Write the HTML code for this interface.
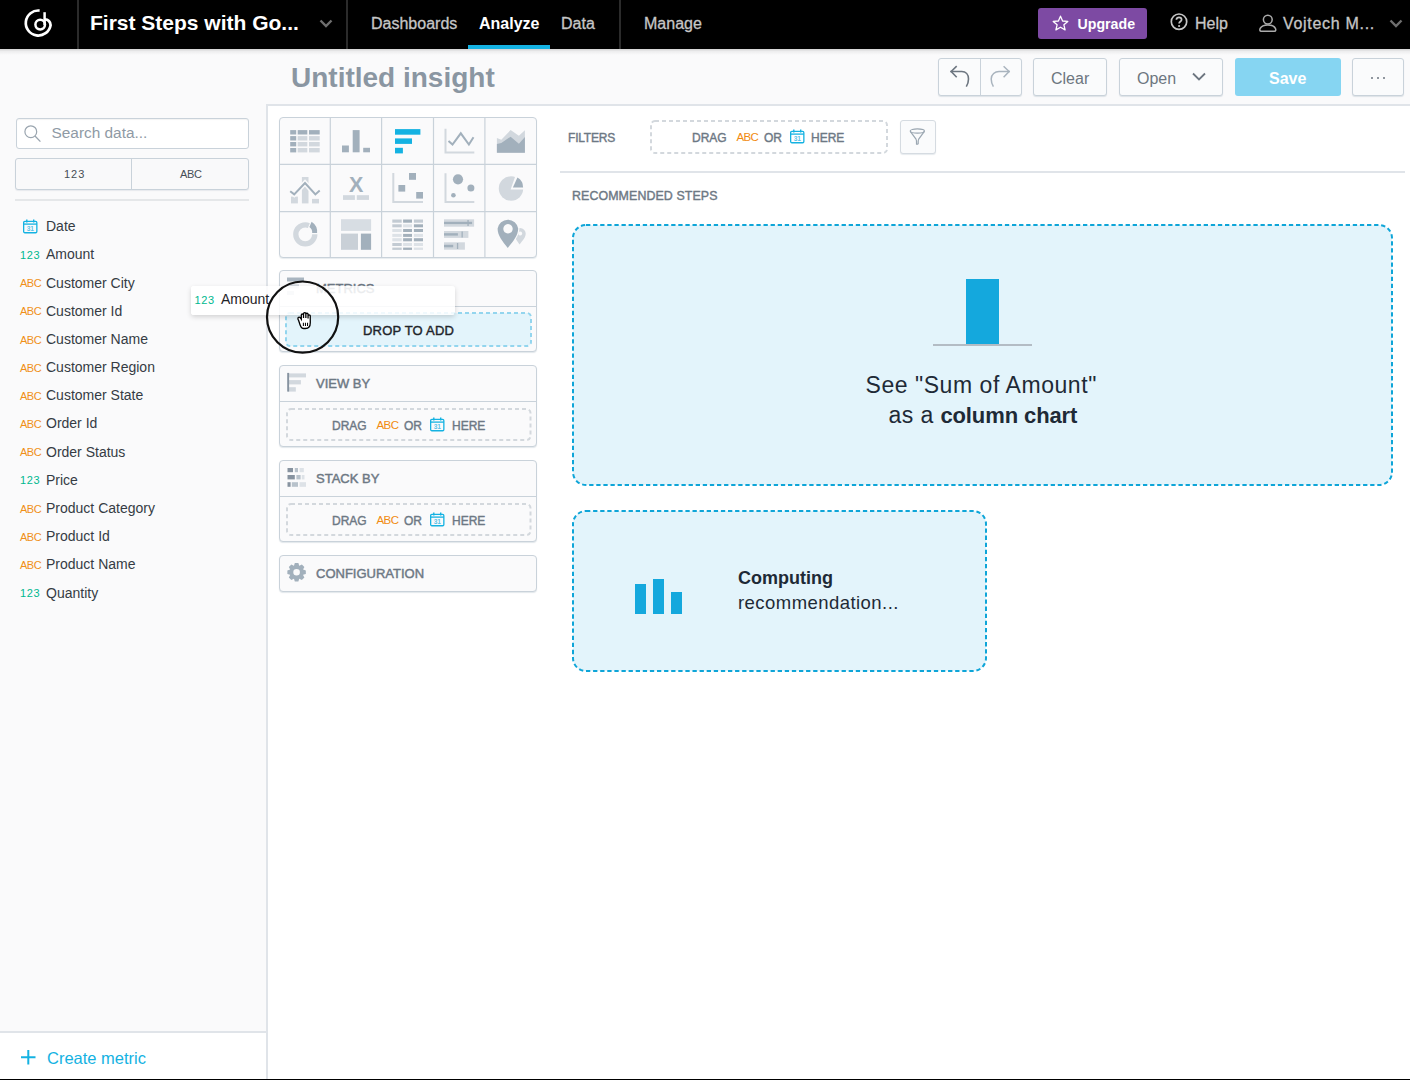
<!DOCTYPE html>
<html><head><meta charset="utf-8">
<style>
*{box-sizing:border-box;margin:0;padding:0}
html,body{width:1410px;height:1080px;overflow:hidden;background:#fff;font-family:"Liberation Sans",sans-serif;position:relative}
.a{position:absolute}
.t{position:absolute;white-space:nowrap;line-height:1}
svg{position:absolute;overflow:visible}
</style></head><body>

<!-- TOP BAR -->
<div class="a" style="left:0;top:0;width:1410px;height:49px;background:#000"></div>

<svg style="left:0;top:0" width="80" height="48">
  <path d="M39.6 10.6 A12.5 12.5 0 1 0 50.6 25.2 C50.4 22.2 48.3 19.6 44.6 19.4" fill="none" stroke="#fff" stroke-width="2.7" stroke-linecap="butt"/>
  <path d="M44.6 12.2 V25" fill="none" stroke="#fff" stroke-width="2.5"/>
  <circle cx="40.2" cy="24.6" r="4.8" fill="none" stroke="#fff" stroke-width="2.5"/>
</svg>
<div class="a" style="left:77px;top:0;width:2px;height:49px;background:#2b2b2b"></div>
<div class="t" style="left:90px;top:12.3px;font-size:21px;font-weight:700;color:#fff">First Steps with Go...</div>
<svg style="left:318px;top:17px" width="16" height="12"><path d="M2.5 3.5 L8 9 L13.5 3.5" fill="none" stroke="#6f6f6f" stroke-width="2.4"/></svg>
<div class="a" style="left:346px;top:0;width:2px;height:49px;background:#2b2b2b"></div>
<div class="t" style="left:371px;top:15.5px;font-size:16px;color:#c6c6c6;-webkit-text-stroke:0.3px #c6c6c6">Dashboards</div>
<div class="t" style="left:479px;top:15.5px;font-size:16px;font-weight:700;color:#fff">Analyze</div>
<div class="t" style="left:561px;top:15.5px;font-size:16px;color:#c6c6c6;-webkit-text-stroke:0.3px #c6c6c6">Data</div>
<div class="a" style="left:468px;top:45px;width:82px;height:4px;background:#14b2e2"></div>
<div class="a" style="left:619px;top:0;width:2px;height:49px;background:#2b2b2b"></div>
<div class="t" style="left:644px;top:15.5px;font-size:16px;color:#c6c6c6;-webkit-text-stroke:0.3px #c6c6c6">Manage</div>

<div class="a" style="left:1038px;top:8px;width:109px;height:31px;background:#7d4aa3;border-radius:3px"></div>
<svg style="left:1052px;top:15px" width="17" height="17"><path d="M8.5 1.2 L10.6 6 L15.8 6.4 L11.9 9.8 L13.1 14.9 L8.5 12.2 L3.9 14.9 L5.1 9.8 L1.2 6.4 L6.4 6 Z" fill="none" stroke="#fff" stroke-width="1.3" stroke-linejoin="round"/></svg>
<div class="t" style="left:1077.5px;top:16.6px;font-size:14.2px;font-weight:700;color:#fff">Upgrade</div>
<svg style="left:1170px;top:13px" width="18" height="18"><circle cx="9" cy="8.7" r="7.7" fill="none" stroke="#c6c6c6" stroke-width="1.7"/><path d="M6.4 6.8 C6.4 5.2 7.6 4.3 9 4.3 C10.5 4.3 11.6 5.3 11.6 6.7 C11.6 8.4 9.1 8.6 9.1 10.5" fill="none" stroke="#c6c6c6" stroke-width="1.7"/><circle cx="9.1" cy="13" r="1.1" fill="#c6c6c6"/></svg>
<div class="t" style="left:1195px;top:15.5px;font-size:16px;color:#c6c6c6;-webkit-text-stroke:0.3px #c6c6c6">Help</div>
<svg style="left:1258px;top:13px" width="20" height="20"><circle cx="9.8" cy="6.6" r="4.4" fill="none" stroke="#ababab" stroke-width="1.5"/><path d="M3.2 18.2 C1.6 18.2 1.6 16.6 2.2 15.4 C3.3 13.2 6 11.9 9.8 11.9 C13.6 11.9 16.3 13.2 17.4 15.4 C18 16.6 18 18.2 16.4 18.2 Z" fill="none" stroke="#ababab" stroke-width="1.5" stroke-linejoin="round"/></svg>
<div class="t" style="left:1283px;top:15.5px;font-size:16px;color:#c6c6c6;letter-spacing:0.7px;-webkit-text-stroke:0.3px #c6c6c6">Vojtech M...</div>
<svg style="left:1388px;top:17px" width="16" height="12"><path d="M2.5 3.5 L8 9 L13.5 3.5" fill="none" stroke="#6f6f6f" stroke-width="2.4"/></svg>

<!-- HEADER ROW -->
<div class="a" style="left:0;top:49px;width:1410px;height:55px;background:#fafafb"></div>
<div class="a" style="left:0;top:49px;width:1410px;height:6px;background:linear-gradient(rgba(0,0,0,.16),rgba(0,0,0,.05) 40%,rgba(0,0,0,0))"></div>
<div class="a" style="left:266px;top:104px;width:1144px;height:2px;background:#e0e4e9"></div>
<div class="t" style="left:291px;top:63.7px;font-size:28px;font-weight:700;color:#8a96a2">Untitled insight</div>


<!-- toolbar buttons -->
<div class="a" style="left:938px;top:58px;width:84px;height:38px;border:1px solid #c9d2da;border-radius:3px;background:#fafbfc;box-shadow:0 1px 1px rgba(20,56,93,.12)"></div>
<div class="a" style="left:980px;top:59px;width:1px;height:36px;background:#c9d2da"></div>
<svg style="left:946px;top:63px" width="28" height="28"><path d="M4.3 8.5 H15.8 C19.8 8.5 22.5 11.5 22.5 16 C22.5 19 21.6 21.5 20.3 23.6" fill="none" stroke="#6d7680" stroke-width="1.6"/><path d="M10.7 3.2 L5.2 8.5 L10.7 14.3" fill="none" stroke="#6d7680" stroke-width="1.6"/></svg>
<svg style="left:987px;top:63px" width="28" height="28"><path d="M23 8.5 H12 C8 8.5 4.2 11.5 4.2 16 C4.2 19 5.1 21.5 6.4 23.6" fill="none" stroke="#a9b4be" stroke-width="1.5"/><path d="M16.6 3.2 L22.1 8.5 L16.6 14.3" fill="none" stroke="#a9b4be" stroke-width="1.5"/></svg>
<div class="a" style="left:1033px;top:58px;width:74px;height:38px;border:1px solid #c9d2da;border-radius:3px;background:#fafbfc;box-shadow:0 1px 1px rgba(20,56,93,.12)"></div>
<div class="t" style="left:1051px;top:71px;font-size:16px;color:#6d7680">Clear</div>
<div class="a" style="left:1119px;top:58px;width:104px;height:38px;border:1px solid #c9d2da;border-radius:3px;background:#fafbfc;box-shadow:0 1px 1px rgba(20,56,93,.12)"></div>
<div class="t" style="left:1137px;top:71px;font-size:16px;color:#6d7680">Open</div>
<svg style="left:1191px;top:71px" width="16" height="12"><path d="M2 2.5 L8 8.5 L14 2.5" fill="none" stroke="#6d7680" stroke-width="1.8"/></svg>
<div class="a" style="left:1235px;top:58px;width:106px;height:38px;border-radius:3px;background:#86d5f2"></div>
<div class="t" style="left:1269px;top:71px;font-size:16px;font-weight:700;color:#fff">Save</div>
<div class="a" style="left:1352px;top:58px;width:52px;height:38px;border:1px solid #c9d2da;border-radius:3px;background:#fafbfc;box-shadow:0 1px 1px rgba(20,56,93,.12)"></div>
<div class="a" style="left:1371px;top:77px;width:2px;height:2px;background:#6d7680;border-radius:1px"></div>
<div class="a" style="left:1377px;top:77px;width:2px;height:2px;background:#6d7680;border-radius:1px"></div>
<div class="a" style="left:1383px;top:77px;width:2px;height:2px;background:#6d7680;border-radius:1px"></div>

<!-- LEFT PANEL -->
<div class="a" style="left:0;top:104px;width:266px;height:927px;background:#fafafb"></div>
<div class="a" style="left:266px;top:104px;width:2px;height:975px;background:#e0e4e9"></div>
<div class="a" style="left:0;top:1031px;width:266px;height:2px;background:#e0e4e9"></div>
<div class="a" style="left:15.5px;top:117.5px;width:233px;height:31.5px;border:1px solid #c9d2da;border-radius:3px;background:#fff;box-shadow:inset 0 1px 1px rgba(0,0,0,.05)"></div>
<svg style="left:22px;top:123px" width="22" height="22"><circle cx="8.8" cy="8.7" r="5.9" fill="none" stroke="#9aa5af" stroke-width="1.2"/><path d="M13 13 L18.4 18.6" stroke="#9aa5af" stroke-width="1.3"/></svg>
<div class="t" style="left:51.5px;top:124.6px;font-size:15.4px;color:#8f9aa5">Search data...</div>
<div class="a" style="left:15px;top:158px;width:234px;height:32px;border:1px solid #c9d2da;border-radius:3px;background:#f9f9fa;box-shadow:0 1px 1px rgba(20,56,93,.08)"></div>
<div class="a" style="left:131px;top:159px;width:1px;height:30px;background:#c9d2da"></div>
<div class="t" style="left:64px;top:169px;font-size:11px;color:#464e56;letter-spacing:1px">123</div>
<div class="t" style="left:180px;top:169px;font-size:11px;color:#464e56;letter-spacing:-0.3px">ABC</div>
<div class="a" style="left:15px;top:199px;width:234px;height:2px;background:#e5e7e9"></div>

<div class="t" style="left:46px;top:219.2px;font-size:14px;color:#353c44">Date</div>
<svg style="left:23.0px;top:218.8px" width="15" height="15"><rect x="0.65" y="2.45" width="13.2" height="11.3" rx="1.2" fill="none" stroke="#14b2e2" stroke-width="1.3"/><path d="M0.65 5.1 H13.85" stroke="#14b2e2" stroke-width="1.3"/><path d="M3.8 0.6 V3.6 M10.7 0.6 V3.6" stroke="#14b2e2" stroke-width="1.4"/><text x="7.3" y="12.1" font-size="6.6" text-anchor="middle" fill="#5cc2e8" font-family="Liberation Sans" font-weight="700">31</text></svg>
<div class="t" style="left:46px;top:247.4px;font-size:14px;color:#353c44">Amount</div>
<div class="t" style="left:20px;top:250.0px;font-size:11px;color:#00b88f;letter-spacing:0.6px">123</div>
<div class="t" style="left:46px;top:275.6px;font-size:14px;color:#353c44">Customer City</div>
<div class="t" style="left:20px;top:278.1px;font-size:11px;color:#f09018;letter-spacing:-0.5px">ABC</div>
<div class="t" style="left:46px;top:303.8px;font-size:14px;color:#353c44">Customer Id</div>
<div class="t" style="left:20px;top:306.3px;font-size:11px;color:#f09018;letter-spacing:-0.5px">ABC</div>
<div class="t" style="left:46px;top:331.9px;font-size:14px;color:#353c44">Customer Name</div>
<div class="t" style="left:20px;top:334.5px;font-size:11px;color:#f09018;letter-spacing:-0.5px">ABC</div>
<div class="t" style="left:46px;top:360.1px;font-size:14px;color:#353c44">Customer Region</div>
<div class="t" style="left:20px;top:362.7px;font-size:11px;color:#f09018;letter-spacing:-0.5px">ABC</div>
<div class="t" style="left:46px;top:388.3px;font-size:14px;color:#353c44">Customer State</div>
<div class="t" style="left:20px;top:390.8px;font-size:11px;color:#f09018;letter-spacing:-0.5px">ABC</div>
<div class="t" style="left:46px;top:416.4px;font-size:14px;color:#353c44">Order Id</div>
<div class="t" style="left:20px;top:419.0px;font-size:11px;color:#f09018;letter-spacing:-0.5px">ABC</div>
<div class="t" style="left:46px;top:444.6px;font-size:14px;color:#353c44">Order Status</div>
<div class="t" style="left:20px;top:447.2px;font-size:11px;color:#f09018;letter-spacing:-0.5px">ABC</div>
<div class="t" style="left:46px;top:472.8px;font-size:14px;color:#353c44">Price</div>
<div class="t" style="left:20px;top:475.3px;font-size:11px;color:#00b88f;letter-spacing:0.6px">123</div>
<div class="t" style="left:46px;top:501.0px;font-size:14px;color:#353c44">Product Category</div>
<div class="t" style="left:20px;top:503.5px;font-size:11px;color:#f09018;letter-spacing:-0.5px">ABC</div>
<div class="t" style="left:46px;top:529.1px;font-size:14px;color:#353c44">Product Id</div>
<div class="t" style="left:20px;top:531.7px;font-size:11px;color:#f09018;letter-spacing:-0.5px">ABC</div>
<div class="t" style="left:46px;top:557.3px;font-size:14px;color:#353c44">Product Name</div>
<div class="t" style="left:20px;top:559.8px;font-size:11px;color:#f09018;letter-spacing:-0.5px">ABC</div>
<div class="t" style="left:46px;top:585.5px;font-size:14px;color:#353c44">Quantity</div>
<div class="t" style="left:20px;top:588.0px;font-size:11px;color:#00b88f;letter-spacing:0.6px">123</div>
<div class="a" style="left:0;top:1033px;width:266px;height:46px;background:#fff"></div>
<svg style="left:20px;top:1049px" width="17" height="17"><path d="M8.3 1 V15.5 M1 8.3 H15.5" stroke="#14b2e2" stroke-width="2"/></svg>
<div class="t" style="left:47px;top:1049.5px;font-size:16.5px;color:#14b2e2">Create metric</div>
<div class="a" style="left:0;top:1079px;width:1410px;height:1px;background:#000"></div>


<!-- CHART TYPE GRID -->
<div class="a" style="left:279px;top:117px;width:258px;height:141px;border:1px solid #c9d2da;border-radius:4px;background:#fafafb;box-shadow:0 1px 1px rgba(20,56,93,.10)"></div>
<svg style="left:0;top:0" width="1410" height="300">
  <g stroke="#c9d2da" stroke-width="1.2">
    <path d="M330.3 118 V257.5 M381.6 118 V257.5 M433.5 118 V257.5 M484.9 118 V257.5"/>
    <path d="M280 164.4 H536.5 M280 211.6 H536.5"/>
  </g>
  <!-- table -->
  <g fill="#a2b0bc">
    <rect x="290.2" y="130.1" width="6" height="4.4"/><rect x="297.7" y="130.1" width="9.6" height="4.4"/><rect x="309" y="130.1" width="10.7" height="4.4"/>
    <rect x="290.2" y="136.1" width="6" height="4.4"/><rect x="290.2" y="142" width="6" height="4.4"/><rect x="290.2" y="148" width="6" height="4.4"/>
  </g>
  <g fill="#d2d8de">
    <rect x="297.7" y="136.1" width="9.6" height="4.4"/><rect x="309" y="136.1" width="10.7" height="4.4"/>
    <rect x="297.7" y="142" width="9.6" height="4.4"/><rect x="309" y="142" width="10.7" height="4.4"/>
    <rect x="297.7" y="148" width="9.6" height="4.4"/><rect x="309" y="148" width="10.7" height="4.4"/>
  </g>
  <!-- column -->
  <g fill="#a2b0bc"><rect x="342" y="145.5" width="6.9" height="6.8"/><rect x="352.7" y="130.1" width="6.9" height="22.2"/><rect x="363.2" y="147.8" width="6.8" height="4.5"/></g>
  <!-- bar active -->
  <g fill="#14b2e2"><rect x="395" y="129.1" width="25.4" height="5.6"/><rect x="395" y="138.4" width="17" height="5.5"/><rect x="395" y="147.8" width="7.9" height="5.6"/></g>
  <!-- line -->
  <path d="M445.5 128.8 V152.4 H474.3" fill="none" stroke="#d2d8de" stroke-width="2"/>
  <path d="M448.5 140.9 L452.5 144.5 L460.8 133.3 L468.9 144.5 L473.5 137.3" fill="none" stroke="#a2b0bc" stroke-width="2"/>
  <!-- area -->
  <path d="M496.9 152.7 V137.9 L501.3 139.7 L510.6 130 L518.9 135.8 L524.9 130.2 V152.7 Z" fill="#d2d8de"/>
  <path d="M496.9 152.7 V144.1 L501.3 142.9 L510.6 136.7 L518.9 143.8 L524.9 137.1 V152.7 Z" fill="#a2b0bc"/>
  <!-- combo -->
  <g fill="#d2d8de"><rect x="291" y="196.6" width="6.9" height="6.8"/><rect x="301.9" y="177" width="6.6" height="26.4"/><rect x="312" y="198.9" width="7" height="4.5"/></g>
  <path d="M290.2 191.2 L294.2 194.4 L305 183 L315.4 194.4 L319.7 190.6" fill="none" stroke="#fafafb" stroke-width="5" stroke-linejoin="miter"/>
  <path d="M290.2 191.2 L294.2 194.4 L305 183 L315.4 194.4 L319.7 190.6" fill="none" stroke="#a2b0bc" stroke-width="2"/>
  <!-- headline X -->
  <text x="356.2" y="192" font-family="Liberation Sans" font-weight="700" font-size="21.5" text-anchor="middle" fill="#a2b0bc">X</text>
  <g fill="#d2d8de"><rect x="343" y="195.2" width="11.9" height="4.7"/><rect x="356.8" y="195.2" width="12.2" height="4.7"/></g>
  <!-- scatter -->
  <path d="M393.3 173 V202 H423" fill="none" stroke="#d2d8de" stroke-width="2"/>
  <g fill="#a2b0bc"><rect x="409" y="173" width="7" height="6.8"/><rect x="398.4" y="185" width="6.8" height="6.6"/><rect x="416.2" y="192" width="6.8" height="6.6"/></g>
  <!-- bubble -->
  <path d="M445.5 173.3 V201.9 H474.3" fill="none" stroke="#d2d8de" stroke-width="2"/>
  <g fill="#a2b0bc"><circle cx="458" cy="179.3" r="5.1"/><circle cx="470.9" cy="188.1" r="3.5"/><circle cx="453.4" cy="195.2" r="2.3"/></g>
  <!-- pie -->
  <circle cx="511" cy="188.5" r="12.2" fill="#d2d8de"/>
  <path d="M510.6 189.6 L515.9 174.6 A14.5 14.5 0 0 1 526 189.6 Z" fill="#fafafb"/>
  <path d="M512.9 187.4 L517.4 177.4 A11.4 11.4 0 0 1 523.1 187.4 Z" fill="#a2b0bc"/>
  <!-- donut -->
  <circle cx="305.3" cy="234.3" r="9.5" fill="none" stroke="#d2d8de" stroke-width="5.3"/>
  <path d="M305.3 234.3 L311.3 219.8 A16 16 0 0 1 321.3 234.3 Z" fill="#fafafb"/>
  <path d="M311.6 221.7 A12.2 12.2 0 0 1 317.1 233.1 L312.2 233.1 A6.9 6.9 0 0 0 309.4 227.1 Z" fill="#a2b0bc"/>
  <!-- treemap -->
  <rect x="341" y="219.2" width="30.1" height="11.7" fill="#d7dde3"/>
  <rect x="341" y="233.6" width="17" height="16.2" fill="#c9d0d7"/>
  <rect x="360.9" y="233.6" width="10.2" height="16.2" fill="#a2b0bc"/>
  <!-- heatmap -->
  <g>
<rect x="392.3" y="219.5" width="9.4" height="3.2" fill="#c3cbd3"/><rect x="403.1" y="219.5" width="8.9" height="3.2" fill="#a3b0bb"/><rect x="413.9" y="219.5" width="9.1" height="3.2" fill="#c3cbd3"/><rect x="392.3" y="224.3" width="9.4" height="3" fill="#c3cbd3"/><rect x="403.1" y="224.3" width="8.9" height="3" fill="#dde2e7"/><rect x="413.9" y="224.3" width="9.1" height="3" fill="#a3b0bb"/><rect x="392.3" y="229" width="9.4" height="3" fill="#dde2e7"/><rect x="403.1" y="229" width="8.9" height="3" fill="#a3b0bb"/><rect x="413.9" y="229" width="9.1" height="3" fill="#a3b0bb"/><rect x="392.3" y="233.9" width="9.4" height="3" fill="#dde2e7"/><rect x="403.1" y="233.9" width="8.9" height="3" fill="#a3b0bb"/><rect x="413.9" y="233.9" width="9.1" height="3" fill="#dde2e7"/><rect x="392.3" y="238.2" width="9.4" height="3.1" fill="#dde2e7"/><rect x="403.1" y="238.2" width="8.9" height="3.1" fill="#a3b0bb"/><rect x="413.9" y="238.2" width="9.1" height="3.1" fill="#a3b0bb"/><rect x="392.3" y="243" width="9.4" height="3" fill="#c3cbd3"/><rect x="403.1" y="243" width="8.9" height="3" fill="#dde2e7"/><rect x="413.9" y="243" width="9.1" height="3" fill="#dde2e7"/><rect x="392.3" y="247.6" width="9.4" height="2.3" fill="#c3cbd3"/><rect x="403.1" y="247.6" width="8.9" height="2.3" fill="#a3b0bb"/><rect x="413.9" y="247.6" width="9.1" height="2.3" fill="#dde2e7"/>
  </g>
  <!-- bullet -->
  <g fill="#d2d8de"><rect x="444" y="219.3" width="30.1" height="7.4"/><rect x="444" y="231" width="24.4" height="6.9"/><rect x="444" y="242.3" width="20.9" height="7.4"/></g>
  <g fill="#a2b0bc"><rect x="444" y="221.8" width="28.1" height="2.3"/><rect x="467.4" y="220" width="1.3" height="6"/>
  <rect x="444" y="233.2" width="13.9" height="2.4"/><rect x="461.5" y="231.5" width="1.3" height="6"/>
  <rect x="444" y="244.8" width="9.2" height="2.5"/><rect x="456.9" y="243" width="1.3" height="6"/></g>
  <!-- geo pins -->
  <path d="M519.6 244.6 C516.5 240.5 514.5 237.6 514.5 233.6 A5.6 5.6 0 0 1 525.7 233.6 C525.7 237.6 522.7 240.5 519.6 244.6 Z M520.2 231.6 A2 2 0 1 0 520.21 231.6 Z" fill="#d2d8de" fill-rule="evenodd"/>
  <path d="M507.8 249.6 C502 242.5 496.2 236 496.2 228.6 A11.6 11.6 0 0 1 519.4 228.6 C519.4 236 513.6 242.5 507.8 249.6 Z" fill="#fafafb"/>
  <path d="M507.8 248 C502.6 241.5 497.6 235.8 497.6 228.6 A10.4 10.4 0 0 1 518.2 228.6 C518.2 235.8 513 241.5 507.8 248 Z M508 224.1 A4.7 4.7 0 1 0 508.01 224.1 Z" fill="#a2b0bc" fill-rule="evenodd"/>
</svg>


<!-- BUCKETS -->
<div class="a" style="left:279px;top:270px;width:258px;height:82px;border:1px solid #c9d2da;border-radius:4px;background:#fafafb;box-shadow:0 1px 1px rgba(20,56,93,.12)"></div><div class="a" style="left:280px;top:306px;width:256px;height:1px;background:#c9d2da"></div><div class="a" style="left:279px;top:365px;width:258px;height:82px;border:1px solid #c9d2da;border-radius:4px;background:#fafafb;box-shadow:0 1px 1px rgba(20,56,93,.12)"></div><div class="a" style="left:280px;top:401px;width:256px;height:1px;background:#c9d2da"></div><div class="a" style="left:279px;top:460px;width:258px;height:82px;border:1px solid #c9d2da;border-radius:4px;background:#fafafb;box-shadow:0 1px 1px rgba(20,56,93,.12)"></div><div class="a" style="left:280px;top:496px;width:256px;height:1px;background:#c9d2da"></div><div class="a" style="left:279px;top:555px;width:258px;height:37px;border:1px solid #c9d2da;border-radius:4px;background:#fafafb;box-shadow:0 1px 1px rgba(20,56,93,.12)"></div><svg style="left:287px;top:277px" width="20" height="20"><rect x="0" y="0.5" width="17" height="4" fill="#a9b5c0"/><rect x="0" y="7.3" width="12" height="4" fill="#d2d8de"/><rect x="0" y="14" width="7" height="4" fill="#d2d8de"/></svg><div class="t" style="left:316px;top:282.2px;font-size:13px;font-weight:400;color:#6d7884;-webkit-text-stroke:0.45px #6d7884">METRICS</div><svg style="left:285px;top:312px" width="247" height="35"><rect x="1" y="1" width="245" height="33" rx="4" fill="#e3f4fb" stroke="#93d5ee" stroke-width="2" stroke-dasharray="4 3"/></svg><div class="t" style="left:363px;top:324.3px;font-size:13px;font-weight:400;color:#1f242a;letter-spacing:0.2px;-webkit-text-stroke:0.4px #1f242a">DROP TO ADD</div><svg style="left:287px;top:372px" width="20" height="20"><rect x="1.2" y="1.4" width="17.8" height="4" fill="#d2d8de"/><rect x="1.2" y="8.1" width="12.7" height="4.3" fill="#d2d8de"/><rect x="1.2" y="15.2" width="7.6" height="4.4" fill="#d2d8de"/><rect x="0.2" y="0.9" width="1.9" height="18.7" fill="#8793a0"/></svg><div class="t" style="left:316px;top:376.5px;font-size:13px;font-weight:400;color:#6d7884;-webkit-text-stroke:0.45px #6d7884">VIEW BY</div><svg style="left:285.5px;top:408px" width="245.5" height="33"><rect x="1" y="1" width="243.5" height="31" rx="4" fill="none" stroke="#d3d8dd" stroke-width="2" stroke-dasharray="4 3"/></svg><div class="t" style="left:332px;top:419.5px;font-size:12px;font-weight:400;color:#6d7884;-webkit-text-stroke:0.4px #6d7884">DRAG</div><div class="t" style="left:376.5px;top:419.7px;font-size:11.5px;color:#f18a10;letter-spacing:-0.6px">ABC</div><div class="t" style="left:404px;top:419.5px;font-size:12px;font-weight:400;color:#6d7884;-webkit-text-stroke:0.4px #6d7884">OR</div><svg style="left:429.5px;top:417.2px" width="15" height="15"><rect x="0.65" y="2.45" width="13.2" height="11.3" rx="1.2" fill="none" stroke="#14b2e2" stroke-width="1.3"/><path d="M0.65 5.1 H13.85" stroke="#14b2e2" stroke-width="1.3"/><path d="M3.8 0.6 V3.6 M10.7 0.6 V3.6" stroke="#14b2e2" stroke-width="1.4"/><text x="7.3" y="12.1" font-size="6.6" text-anchor="middle" fill="#5cc2e8" font-family="Liberation Sans" font-weight="700">31</text></svg><div class="t" style="left:452px;top:419.5px;font-size:12px;font-weight:400;color:#6d7884;-webkit-text-stroke:0.4px #6d7884">HERE</div><svg style="left:287px;top:467px" width="22" height="22"><g transform="translate(-287,-467)"><rect x="287.5" y="468" width="5.5" height="4.2" fill="#8793a0"/><rect x="294.8" y="468" width="3.2" height="4.2" fill="#b8c2cb"/><rect x="299.6" y="468" width="4.2" height="4.2" fill="#dde2e7"/><rect x="287.5" y="475" width="7.3" height="4.4" fill="#8793a0"/><rect x="296.4" y="475" width="4.2" height="4.4" fill="#b8c2cb"/><rect x="301.8" y="475" width="2.7" height="4.4" fill="#dde2e7"/><rect x="287.5" y="482.2" width="3.1" height="4.6" fill="#8793a0"/><rect x="291.8" y="482.2" width="6.2" height="4.6" fill="#b8c2cb"/><rect x="299.6" y="482.2" width="6.4" height="4.6" fill="#dde2e7"/></g></svg><div class="t" style="left:316px;top:472.1px;font-size:13px;font-weight:400;color:#6d7884;-webkit-text-stroke:0.45px #6d7884">STACK BY</div><svg style="left:285.5px;top:503px" width="245.5" height="33"><rect x="1" y="1" width="243.5" height="31" rx="4" fill="none" stroke="#d3d8dd" stroke-width="2" stroke-dasharray="4 3"/></svg><div class="t" style="left:332px;top:514.5px;font-size:12px;font-weight:400;color:#6d7884;-webkit-text-stroke:0.4px #6d7884">DRAG</div><div class="t" style="left:376.5px;top:514.7px;font-size:11.5px;color:#f18a10;letter-spacing:-0.6px">ABC</div><div class="t" style="left:404px;top:514.5px;font-size:12px;font-weight:400;color:#6d7884;-webkit-text-stroke:0.4px #6d7884">OR</div><svg style="left:429.5px;top:512.2px" width="15" height="15"><rect x="0.65" y="2.45" width="13.2" height="11.3" rx="1.2" fill="none" stroke="#14b2e2" stroke-width="1.3"/><path d="M0.65 5.1 H13.85" stroke="#14b2e2" stroke-width="1.3"/><path d="M3.8 0.6 V3.6 M10.7 0.6 V3.6" stroke="#14b2e2" stroke-width="1.4"/><text x="7.3" y="12.1" font-size="6.6" text-anchor="middle" fill="#5cc2e8" font-family="Liberation Sans" font-weight="700">31</text></svg><div class="t" style="left:452px;top:514.5px;font-size:12px;font-weight:400;color:#6d7884;-webkit-text-stroke:0.4px #6d7884">HERE</div><svg style="left:0;top:0" width="400" height="600"><path d="M293.98 565.71 L294.81 562.97 L298.39 562.97 L299.22 565.71 L299.34 565.76 L301.86 564.41 L304.39 566.94 L303.04 569.46 L303.09 569.58 L305.83 570.41 L305.83 573.99 L303.09 574.82 L303.04 574.94 L304.39 577.46 L301.86 579.99 L299.34 578.64 L299.22 578.69 L298.39 581.43 L294.81 581.43 L293.98 578.69 L293.86 578.64 L291.34 579.99 L288.81 577.46 L290.16 574.94 L290.11 574.82 L287.37 573.99 L287.37 570.41 L290.11 569.58 L290.16 569.46 L288.81 566.94 L291.34 564.41 L293.86 565.76 Z M299.90 572.20 A3.3 3.3 0 1 0 293.30 572.20 A3.3 3.3 0 1 0 299.90 572.20 Z" fill="#a2b0bc" fill-rule="evenodd"/></svg><div class="t" style="left:316px;top:567.2px;font-size:13px;font-weight:400;color:#6d7884;-webkit-text-stroke:0.45px #6d7884">CONFIGURATION</div>
<!-- FILTERS -->
<div class="t" style="left:568px;top:131.5px;font-size:12px;font-weight:400;color:#6d7884;letter-spacing:-0.2px;-webkit-text-stroke:0.4px #6d7884">FILTERS</div><svg style="left:649.5px;top:119.5px" width="238.0" height="34.0"><rect x="1" y="1" width="236.0" height="32.0" rx="4" fill="none" stroke="#d3d8dd" stroke-width="2" stroke-dasharray="4 3"/></svg><div class="t" style="left:692px;top:131.5px;font-size:12px;font-weight:400;color:#6d7884;-webkit-text-stroke:0.4px #6d7884">DRAG</div><div class="t" style="left:736.4px;top:131.7px;font-size:11.5px;color:#f18a10;letter-spacing:-0.6px">ABC</div><div class="t" style="left:764px;top:131.5px;font-size:12px;font-weight:400;color:#6d7884;-webkit-text-stroke:0.4px #6d7884">OR</div><svg style="left:789.5px;top:129.2px" width="15" height="15"><rect x="0.65" y="2.45" width="13.2" height="11.3" rx="1.2" fill="none" stroke="#14b2e2" stroke-width="1.3"/><path d="M0.65 5.1 H13.85" stroke="#14b2e2" stroke-width="1.3"/><path d="M3.8 0.6 V3.6 M10.7 0.6 V3.6" stroke="#14b2e2" stroke-width="1.4"/><text x="7.3" y="12.1" font-size="6.6" text-anchor="middle" fill="#5cc2e8" font-family="Liberation Sans" font-weight="700">31</text></svg><div class="t" style="left:811px;top:131.5px;font-size:12px;font-weight:400;color:#6d7884;-webkit-text-stroke:0.4px #6d7884">HERE</div><div class="a" style="left:900px;top:120px;width:36px;height:34px;border:1px solid #d5dbe1;border-radius:3px;background:#fafbfc;box-shadow:0 1px 1px rgba(20,56,93,.10)"></div><svg style="left:908px;top:127px" width="20" height="20"><ellipse cx="9.3" cy="4" rx="7.1" ry="2.1" fill="none" stroke="#9aa6b1" stroke-width="1.2"/><path d="M2.3 4.4 L8 12.2 C8.4 12.9 8.5 13.6 8.5 14.4 V17.2 C9.3 17.4 9.8 17.2 10.2 16.6 V14.4 C10.2 13.6 10.3 12.9 10.7 12.2 L16.4 4.4" fill="none" stroke="#9aa6b1" stroke-width="1.2" stroke-linejoin="round"/></svg><div class="a" style="left:560px;top:170.5px;width:845px;height:2px;background:#e0e4e9"></div><div class="t" style="left:572px;top:189.8px;font-size:12.4px;font-weight:400;color:#6d7884;letter-spacing:0.1px;-webkit-text-stroke:0.4px #6d7884">RECOMMENDED STEPS</div><svg style="left:572px;top:224px" width="821" height="262"><rect x="1" y="1" width="819" height="260" rx="13" fill="#e3f4fb" stroke="#0ea5d8" stroke-width="2" stroke-dasharray="4.3 2.8"/></svg><div class="a" style="left:966px;top:278.5px;width:33px;height:65.5px;background:#14a8dd"></div><div class="a" style="left:933px;top:344px;width:99px;height:2px;background:#b3bcc4"></div><div class="t" style="left:865.5px;top:373.6px;font-size:23px;color:#1e2a36;letter-spacing:0.55px">See "Sum of Amount"</div><div class="t" style="left:888.5px;top:404.2px;font-size:23px;color:#1e2a36;letter-spacing:0.4px">as a <b style="font-size:22px;letter-spacing:-0.1px">column chart</b></div><svg style="left:572px;top:510px" width="415" height="162"><rect x="1" y="1" width="413" height="160" rx="13" fill="#e3f4fb" stroke="#0ea5d8" stroke-width="2" stroke-dasharray="4.3 2.8"/></svg><div class="a" style="left:635px;top:584.3px;width:11.3px;height:30px;background:#14a8dd"></div><div class="a" style="left:653px;top:578.6px;width:11.3px;height:35.7px;background:#14a8dd"></div><div class="a" style="left:670.5px;top:591.5px;width:11.5px;height:22.8px;background:#14a8dd"></div><div class="t" style="left:738px;top:569.2px;font-size:18px;font-weight:700;color:#1e2a36">Computing</div><div class="t" style="left:738px;top:593.5px;font-size:18.5px;color:#1e2a36;letter-spacing:0.45px">recommendation...</div>

<!-- DRAG OVERLAY -->
<div class="a" style="left:191px;top:285.5px;width:264px;height:29px;background:rgba(255,255,255,.86);border-radius:3px;box-shadow:0 2px 5px rgba(0,0,0,.16)"></div>
<div class="a" style="left:191px;top:285.5px;width:75px;height:29px;background:#fff;border-radius:3px 0 0 3px"></div>
<div class="a" style="left:191px;top:285px;width:79.5px;height:30px;overflow:hidden">
  <div class="t" style="left:3.5px;top:9.5px;font-size:11px;color:#00b88f;letter-spacing:0.6px">123</div>
  <div class="t" style="left:30px;top:6.8px;font-size:14px;color:#1f2328">Amount</div>
</div>
<svg style="left:0;top:0" width="400" height="400">
  <circle cx="302.6" cy="317.1" r="35.6" fill="none" stroke="#111" stroke-width="2.2"/>
  <g transform="translate(294.8,311.6) scale(1.3)">
    <path d="M3 7 C2 5.5 2.3 4.3 3.3 4.3 C4 4.3 4.5 5 5 5.8 L5 2.6 C5 1.6 6.7 1.6 6.7 2.6 V5 V1.6 C6.7 0.6 8.5 0.6 8.5 1.6 V5 V2 C8.5 1 10.2 1 10.2 2 V5.4 V3.2 C10.2 2.3 11.9 2.3 11.9 3.2 V8.6 C11.9 11.4 10.6 13 8.2 13 H6.8 C5 13 4.4 11.6 3 7 Z" fill="#fff" stroke="#000" stroke-width="1"/>
    <path d="M6.6 8.5 V11 M8.2 8.5 V11 M9.8 8.5 V11" stroke="#000" stroke-width="0.8"/>
  </g>
</svg>

</body></html>
